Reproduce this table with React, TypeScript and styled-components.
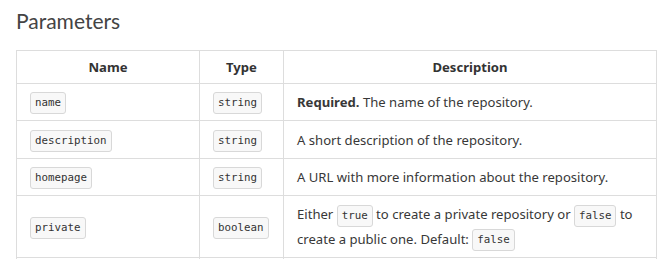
import styled, { createGlobalStyle } from 'styled-components';

const Global = createGlobalStyle`
  body {
    margin: 0;
    background: #fff;
    font-family: "Noto Sans", "Open Sans", sans-serif;
    color: #383838;
  }
`

const Page = styled.div`
  padding: 8px 12px 0 16px;
`

const Title = styled.h2`
  margin: 0 0 17px;
  font-family: Lato, "Noto Sans", sans-serif;
  font-size: 21px;
  font-weight: 400;
  line-height: 25px;
  color: #444;
`

const Table = styled.table`
  width: 641px;
  border-collapse: collapse;
  font-size: 13.1px;
  table-layout: fixed;
`

const Th = styled.th`
  border: 1px solid #ddd;
  padding: 0 13px;
  height: 32px;
  font-weight: 700;
  text-align: center;
  color: #333;
`

const Td = styled.td`
  border: 1px solid #ddd;
  padding: 6px 13px;
  height: 24px;
  line-height: 24px;
  vertical-align: middle;
`

const Code = styled.code`
  display: inline-block;
  font-family: "DejaVu Sans Mono", "Liberation Mono", monospace;
  font-size: 10.8px;
  line-height: 20px;
  padding: 0 4px;
  background: #f8f8f8;
  border: 1px solid #d8d8d8;
  border-radius: 3px;
  color: #333;
  vertical-align: middle;
`

interface IParam {
  name: string;
  type: string;
  desc: React.ReactNode;
}

const params: IParam[] = [
  { name: 'name', type: 'string', desc: <><b>Required.</b> The name of the repository.</> },
  { name: 'description', type: 'string', desc: 'A short description of the repository.' },
  { name: 'homepage', type: 'string', desc: 'A URL with more information about the repository.' },
  {
    name: 'private',
    type: 'boolean',
    desc: <>Either <Code>true</Code> to create a private repository or <Code>false</Code> to create a public one. Default: <Code>false</Code></>,
  },
];

const App = () => {
  return (
    <>
      <Global />
      <Page>
        <Title>Parameters</Title>
        <Table>
          <colgroup>
            <col style={{ width: 183 }} />
            <col style={{ width: 84 }} />
            <col />
          </colgroup>
          <thead>
            <tr>
              <Th>Name</Th>
              <Th>Type</Th>
              <Th>Description</Th>
            </tr>
          </thead>
          <tbody>
            {params.map((p) => (
              <tr key={p.name}>
                <Td><Code>{p.name}</Code></Td>
                <Td><Code>{p.type}</Code></Td>
                <Td>{p.desc}</Td>
              </tr>
            ))}
            <tr>
              <Td />
              <Td />
              <Td />
            </tr>
          </tbody>
        </Table>
      </Page>
    </>
  );
};

export default App;
